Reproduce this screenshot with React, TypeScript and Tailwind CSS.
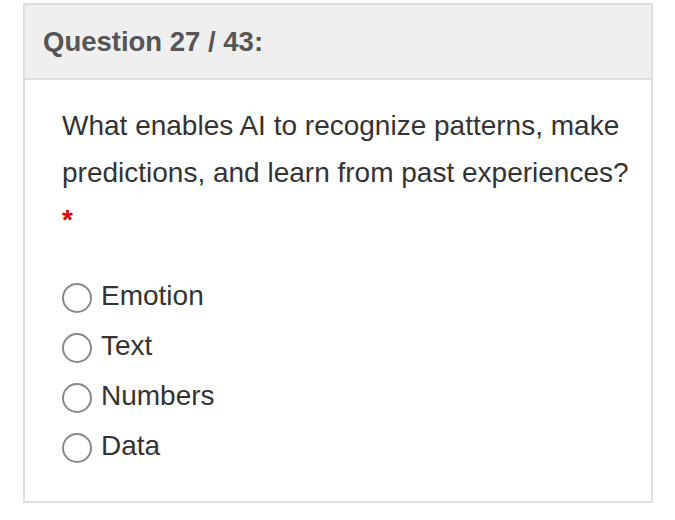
const options = ["Emotion", "Text", "Numbers", "Data"];

export default function App() {
    return (
        <div className="min-h-[520px] bg-white pt-[3px] pl-[23px] font-['Liberation_Sans',Arial,sans-serif]">
            <div className="w-[630px] border-2 border-[#dedede]">
                {/* entête */}
                <div className="h-[75px] bg-[#efefef] border-b-2 border-[#dedede] pl-[18px] flex items-center">
                    <h2 className="text-[27.5px] font-bold text-[#555] leading-none">Question 27 / 43:</h2>
                </div>

                <div className="pl-[37px] pt-[22px] pb-[28px]">
                    <p className="text-[28px] leading-[47px] text-[#333]">
                        What enables AI to recognize patterns, make predictions, and learn from past experiences?
                    </p>
                    <div className="text-[28px] leading-[47px] text-[#e00000] font-bold">*</div>

                    <div className="mt-[30px] flex flex-col">
                        {options.map(opt => (
                            <label key={opt} className="h-[50px] flex items-center gap-[9px] text-[28px] text-[#333]">
                                <span className="w-[30px] h-[30px] rounded-full border-[2.5px] border-[#888] bg-white shrink-0" />
                                <span className="leading-none pb-[4px]">{opt}</span>
                            </label>
                        ))}
                    </div>
                </div>
            </div>
        </div>
    );
}
